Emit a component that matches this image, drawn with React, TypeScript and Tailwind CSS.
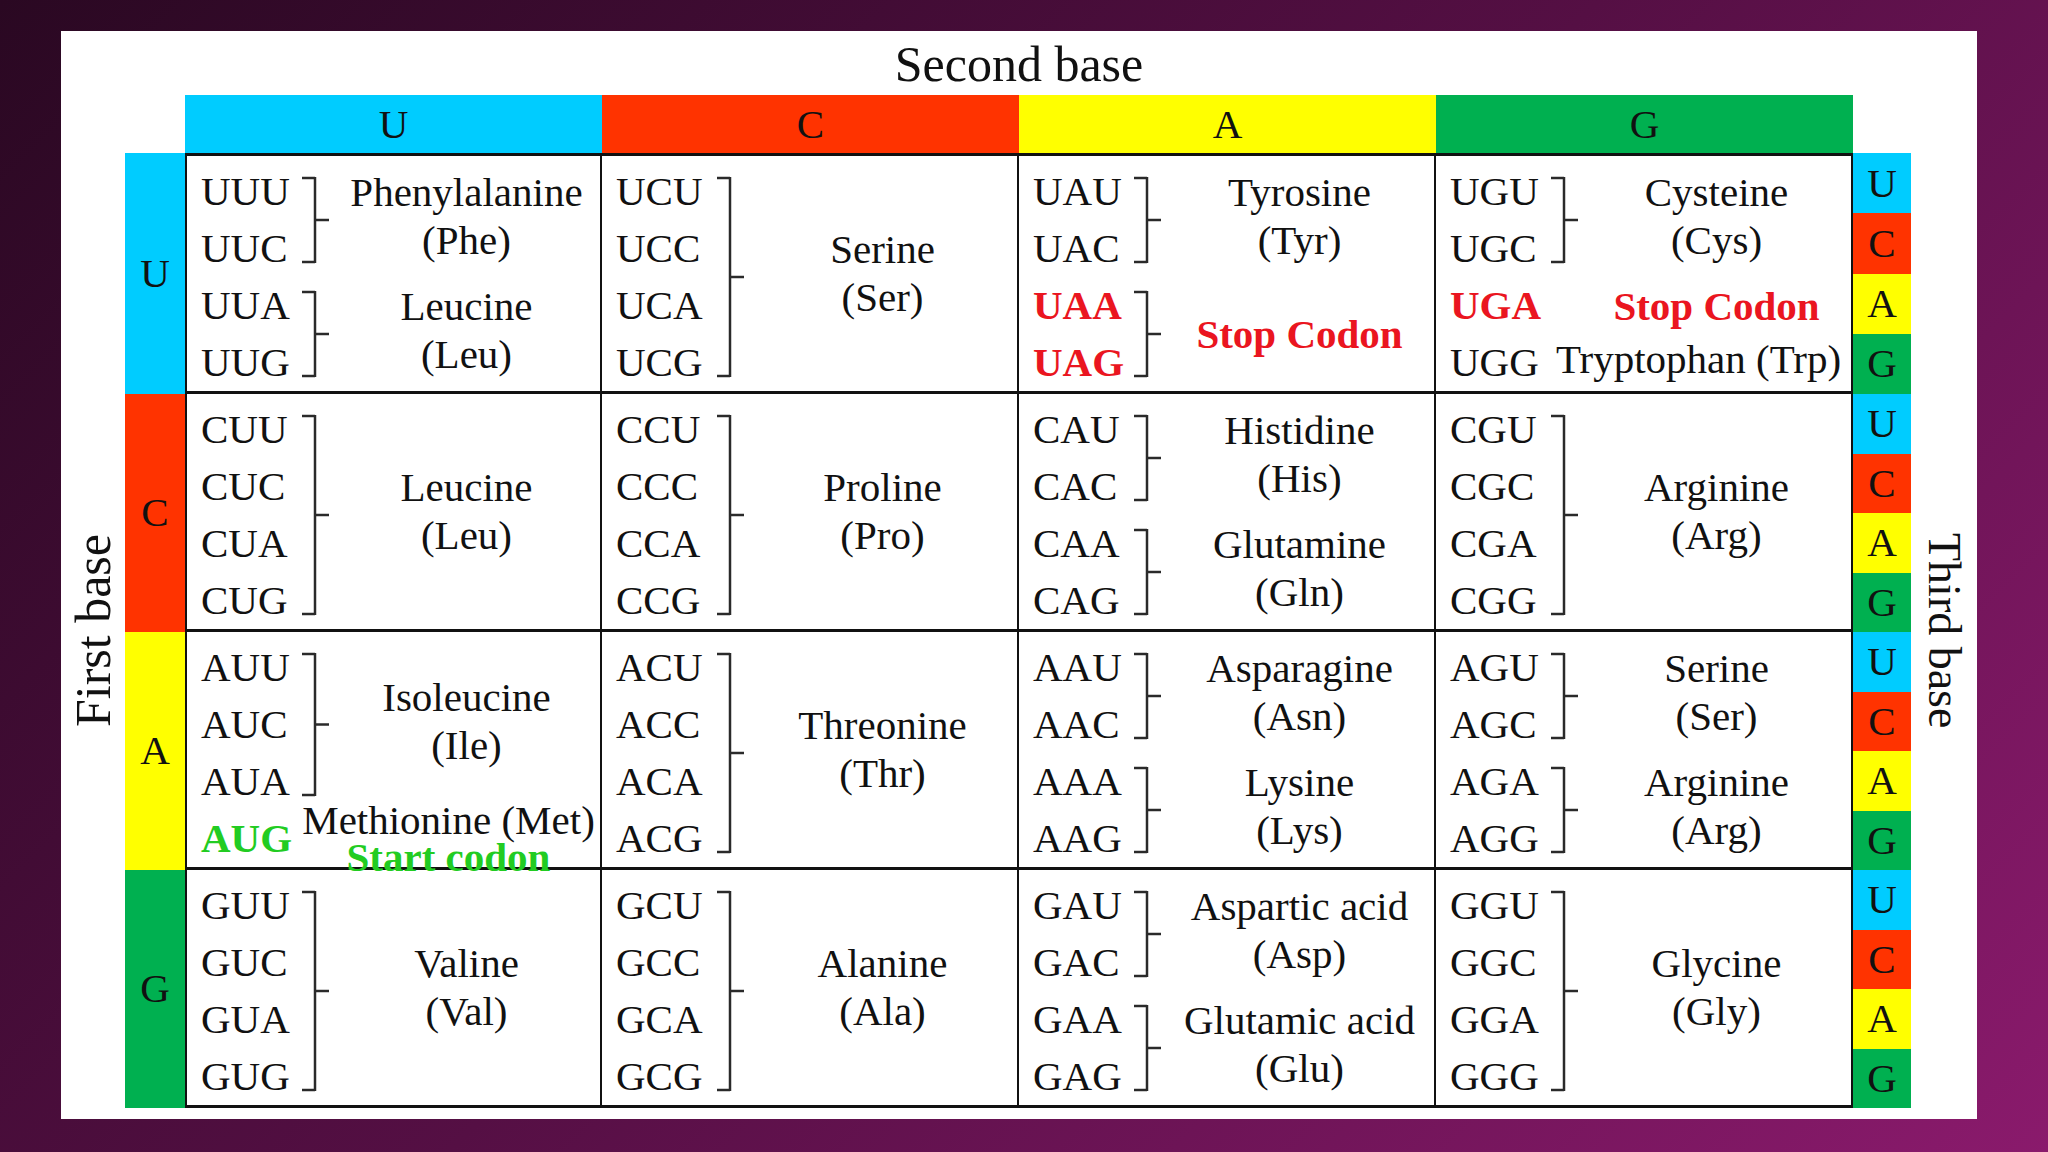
import React from "react";

type Codon = { t: string; c?: "red" | "green" };
type Group = {
  codons: Codon[];
  names: string[];
  mode: "bracket" | "spacer" | "wide";
  style?: "red" | "met";
};
type Cell = Group[];

const b = (codons: string[], names: string[]): Group => ({
  codons: codons.map((t) => ({ t })),
  names,
  mode: "bracket",
});

const groupH: Record<number, string> = {
  1: "h-[57px]",
  2: "h-[114px]",
  3: "h-[171px]",
  4: "h-[228px]",
};

const rows: { base: string; bg: string; cells: Cell[] }[] = [
  {
    base: "U",
    bg: "bg-[#00ccff]",
    cells: [
      [b(["UUU", "UUC"], ["Phenylalanine", "(Phe)"]), b(["UUA", "UUG"], ["Leucine", "(Leu)"])],
      [b(["UCU", "UCC", "UCA", "UCG"], ["Serine", "(Ser)"])],
      [
        b(["UAU", "UAC"], ["Tyrosine", "(Tyr)"]),
        {
          codons: [
            { t: "UAA", c: "red" },
            { t: "UAG", c: "red" },
          ],
          names: ["Stop Codon"],
          mode: "bracket",
          style: "red",
        },
      ],
      [
        b(["UGU", "UGC"], ["Cysteine", "(Cys)"]),
        { codons: [{ t: "UGA", c: "red" }], names: ["Stop Codon"], mode: "spacer", style: "red" },
        { codons: [{ t: "UGG" }], names: ["Tryptophan (Trp)"], mode: "wide" },
      ],
    ],
  },
  {
    base: "C",
    bg: "bg-[#ff3300]",
    cells: [
      [b(["CUU", "CUC", "CUA", "CUG"], ["Leucine", "(Leu)"])],
      [b(["CCU", "CCC", "CCA", "CCG"], ["Proline", "(Pro)"])],
      [b(["CAU", "CAC"], ["Histidine", "(His)"]), b(["CAA", "CAG"], ["Glutamine", "(Gln)"])],
      [b(["CGU", "CGC", "CGA", "CGG"], ["Arginine", "(Arg)"])],
    ],
  },
  {
    base: "A",
    bg: "bg-[#ffff00]",
    cells: [
      [
        b(["AUU", "AUC", "AUA"], ["Isoleucine", "(Ile)"]),
        {
          codons: [{ t: "AUG", c: "green" }],
          names: ["Methionine (Met)", "Start codon"],
          mode: "wide",
          style: "met",
        },
      ],
      [b(["ACU", "ACC", "ACA", "ACG"], ["Threonine", "(Thr)"])],
      [b(["AAU", "AAC"], ["Asparagine", "(Asn)"]), b(["AAA", "AAG"], ["Lysine", "(Lys)"])],
      [b(["AGU", "AGC"], ["Serine", "(Ser)"]), b(["AGA", "AGG"], ["Arginine", "(Arg)"])],
    ],
  },
  {
    base: "G",
    bg: "bg-[#00b050]",
    cells: [
      [b(["GUU", "GUC", "GUA", "GUG"], ["Valine", "(Val)"])],
      [b(["GCU", "GCC", "GCA", "GCG"], ["Alanine", "(Ala)"])],
      [
        b(["GAU", "GAC"], ["Aspartic acid", "(Asp)"]),
        b(["GAA", "GAG"], ["Glutamic acid", "(Glu)"]),
      ],
      [b(["GGU", "GGC", "GGA", "GGG"], ["Glycine", "(Gly)"])],
    ],
  },
];

const headers = [
  { l: "U", bg: "bg-[#00ccff]" },
  { l: "C", bg: "bg-[#ff3300]" },
  { l: "A", bg: "bg-[#ffff00]" },
  { l: "G", bg: "bg-[#00b050]" },
];

function Bracket({ n }: { n: number }) {
  const H = n * 57;
  return (
    <svg width={36} height={H} className="shrink-0" viewBox={`0 0 36 ${H}`}>
      <g stroke="#2a2a2a" strokeWidth={2.5} fill="none">
        <line x1={18} y1={14} x2={18} y2={H - 14} />
        <line x1={5} y1={15} x2={18} y2={15} />
        <line x1={5} y1={H - 15} x2={18} y2={H - 15} />
        <line x1={18} y1={H / 2} x2={32} y2={H / 2} />
      </g>
    </svg>
  );
}

function CodonText({ c }: { c: Codon }) {
  const cls =
    c.c === "red"
      ? "font-bold text-[#ea1520]"
      : c.c === "green"
      ? "font-bold text-[#22cc22]"
      : "";
  return <div className={`h-[57px] leading-[57px] whitespace-nowrap ${cls}`}>{c.t}</div>;
}

function GroupView({ g }: { g: Group }) {
  const n = g.codons.length;
  return (
    <div className={`flex ${groupH[n]}`}>
      <div className="w-[96px] shrink-0 flex flex-col">
        {g.codons.map((c) => (
          <CodonText key={c.t} c={c} />
        ))}
      </div>
      {g.mode === "bracket" && <Bracket n={n} />}
      {g.mode === "spacer" && <div className="w-[36px] shrink-0" />}
      {g.style === "red" && (
        <div className="flex-1 flex flex-col items-center justify-center text-center whitespace-nowrap">
          <div className="leading-[50px] font-bold text-[#ea1520]">{g.names[0]}</div>
        </div>
      )}
      {g.style === "met" && (
        <div className="flex-1 flex flex-col items-center justify-center text-center whitespace-nowrap">
          <div className="leading-[36px]">{g.names[0]}</div>
          <div className="leading-[38px] font-bold text-[#22cc22]">{g.names[1]}</div>
        </div>
      )}
      {!g.style && (
        <div className="flex-1 flex flex-col items-center justify-center text-center whitespace-nowrap pb-[8px]">
          {g.names.map((nm) => (
            <div key={nm} className="leading-[48px]">
              {nm}
            </div>
          ))}
        </div>
      )}
    </div>
  );
}

export default function App() {
  return (
    <div className="w-[2048px] h-[1152px] overflow-hidden bg-[linear-gradient(135deg,#2a0822_0%,#550f44_50%,#8a1a6c_100%)] pl-[61px] pt-[31px] [font-family:'Liberation_Serif','Times_New_Roman',serif] text-[#111]">
      <div className="w-[1916px] h-[1088px] bg-white flex flex-col">
        <div className="h-[64px] flex shrink-0">
          <div className="w-[124px] shrink-0" />
          <div className="w-[1668px] flex items-center justify-center text-[50px] leading-none pt-[2px]">
            Second base
          </div>
        </div>
        <div className="h-[58px] flex shrink-0">
          <div className="w-[124px] shrink-0" />
          {headers.map((h) => (
            <div
              key={h.l}
              className={`w-[417px] shrink-0 flex items-center justify-center text-[41px] leading-none ${h.bg}`}
            >
              {h.l}
            </div>
          ))}
        </div>
        <div className="flex h-[955px] shrink-0">
          <div className="w-[64px] shrink-0 flex items-center justify-center">
            <span className="[writing-mode:vertical-rl] rotate-180 text-[50px] leading-none">
              First base
            </span>
          </div>
          <div className="w-[60px] shrink-0 flex flex-col">
            {rows.map((r, i) => (
              <div
                key={r.base}
                className={`${i === 0 ? "h-[241px]" : "h-[238px]"} flex items-center justify-center text-[41px] ${r.bg}`}
              >
                {r.base}
              </div>
            ))}
          </div>
          <div className="w-[1668px] shrink-0 border-t-[3px] border-[#111] flex flex-col text-[41px]">
            {rows.map((r) => (
              <div
                key={r.base}
                className="h-[238px] flex border-b-[3px] border-l-2 border-[#111]"
              >
                {r.cells.map((cell, ci) => (
                  <div
                    key={ci}
                    className={`${ci === 0 ? "w-[415px]" : "w-[417px]"} shrink-0 border-r-2 border-[#111] pt-[7px] pl-[14px] flex flex-col`}
                  >
                    {cell.map((g, gi) => (
                      <GroupView key={gi} g={g} />
                    ))}
                  </div>
                ))}
              </div>
            ))}
          </div>
          <div className="w-[58px] shrink-0 flex flex-col">
            {rows.map((r, i) => (
              <div
                key={r.base}
                className={`${i === 0 ? "h-[241px]" : "h-[238px]"} flex flex-col`}
              >
                {headers.map((h) => (
                  <div
                    key={h.l}
                    className={`flex-1 flex items-center justify-center text-[41px] leading-none ${h.bg}`}
                  >
                    {h.l}
                  </div>
                ))}
              </div>
            ))}
          </div>
          <div className="flex-1 flex items-center justify-center">
            <span className="[writing-mode:vertical-rl] text-[46px] leading-none">Third base</span>
          </div>
        </div>
      </div>
    </div>
  );
}
